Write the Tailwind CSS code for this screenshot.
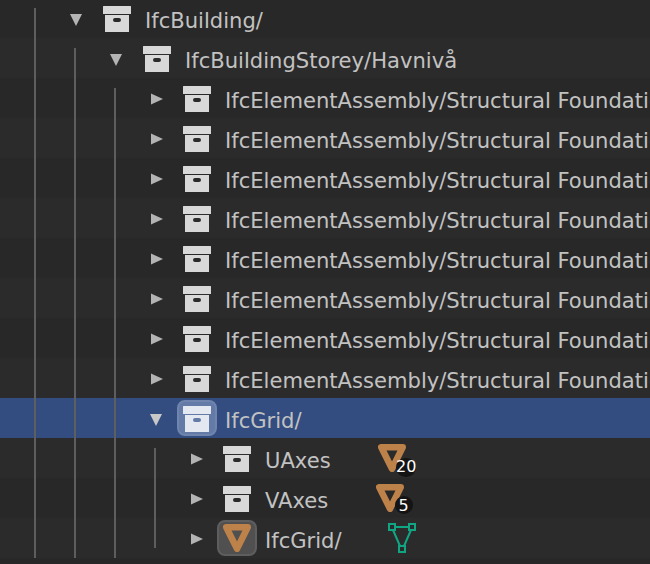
<!DOCTYPE html>
<html lang="en">
<head>
  <meta charset="UTF-8" />
  <title>Outliner</title>
  <script src="https://cdn.jsdelivr.net/npm/@tailwindcss/browser@4"></script>
</head>
<body class="w-[650px] h-[564px] overflow-hidden bg-[#282828] font-['DejaVu_Sans',sans-serif] text-[21.1px] text-[#c2c2c2]">

<!-- small svg defs used by every row -->
<svg class="hidden">
  <symbol id="box" viewBox="0 0 28 26">
    <path fill-rule="evenodd" d="M0 0.500a.5.5 0 0 1 .5-.5h27a.5.5 0 0 1 .5.5v7a.5.5 0 0 1-.5.5H.5a.5.5 0 0 1-.5-.5zM2 9h24v16.500a.5.5 0 0 1-.5.5h-23a.5.5 0 0 1-.5-.5zM12 12a2 2 0 0 0 0 4h4a2 2 0 0 0 0-4z"/>
  </symbol>
  <symbol id="tri" viewBox="0 0 28 28">
    <path fill="none" stroke="currentColor" stroke-width="6.500" stroke-linejoin="round" d="M3.250 3.250h21.500L14 24.750z"/>
  </symbol>
  <symbol id="right" viewBox="0 0 12 12"><path d="M0 0.500l12 5.500-12 5.500z"/></symbol>
  <symbol id="down" viewBox="0 0 12 12"><path d="M0 0h12L6 12z"/></symbol>
</svg>

<div class="relative -mt-[2px]">
  <div class="absolute z-10 left-[34px] top-[10px] bottom-0 w-[2px] bg-[#5e5e5e]"></div>
  <div class="h-10 flex items-center pl-[70px]">
    <svg class="w-3 h-3 mt-1 shrink-0 fill-[#b4b4b4]"><use href="#down"/></svg>
    <svg class="w-7 h-[26px] ml-[21px] mt-[2px] shrink-0 fill-[#d8d8d8]"><use href="#box"/></svg>
    <span class="ml-[14px] pt-[6px] whitespace-nowrap">IfcBuilding/</span>
  </div>

  <div class="relative">
    <div class="absolute z-10 left-[74px] top-[10px] bottom-0 w-[2px] bg-[#5e5e5e]"></div>
    <div class="h-10 flex items-center pl-[110px] bg-[#2b2b2b]">
      <svg class="w-3 h-3 mt-1 shrink-0 fill-[#b4b4b4]"><use href="#down"/></svg>
      <svg class="w-7 h-[26px] ml-[21px] mt-[2px] shrink-0 fill-[#d8d8d8]"><use href="#box"/></svg>
      <span class="ml-[14px] pt-[6px] whitespace-nowrap">IfcBuildingStorey/Havnivå</span>
    </div>

    <div class="relative">
      <div class="absolute z-10 left-[114px] top-[10px] bottom-0 w-[2px] bg-[#5e5e5e]"></div>

      <div class="h-10 flex items-center pl-[151px]">
        <svg class="w-3 h-3 mt-[2px] shrink-0 fill-[#b4b4b4]"><use href="#right"/></svg>
        <svg class="w-7 h-[26px] ml-[20px] mt-[2px] shrink-0 fill-[#d8d8d8]"><use href="#box"/></svg>
        <span class="ml-[14px] pt-[6px] whitespace-nowrap">IfcElementAssembly/Structural Foundation</span>
      </div>
      <div class="h-10 flex items-center pl-[151px] bg-[#2b2b2b]">
        <svg class="w-3 h-3 mt-[2px] shrink-0 fill-[#b4b4b4]"><use href="#right"/></svg>
        <svg class="w-7 h-[26px] ml-[20px] mt-[2px] shrink-0 fill-[#d8d8d8]"><use href="#box"/></svg>
        <span class="ml-[14px] pt-[6px] whitespace-nowrap">IfcElementAssembly/Structural Foundation</span>
      </div>
      <div class="h-10 flex items-center pl-[151px]">
        <svg class="w-3 h-3 mt-[2px] shrink-0 fill-[#b4b4b4]"><use href="#right"/></svg>
        <svg class="w-7 h-[26px] ml-[20px] mt-[2px] shrink-0 fill-[#d8d8d8]"><use href="#box"/></svg>
        <span class="ml-[14px] pt-[6px] whitespace-nowrap">IfcElementAssembly/Structural Foundation</span>
      </div>
      <div class="h-10 flex items-center pl-[151px] bg-[#2b2b2b]">
        <svg class="w-3 h-3 mt-[2px] shrink-0 fill-[#b4b4b4]"><use href="#right"/></svg>
        <svg class="w-7 h-[26px] ml-[20px] mt-[2px] shrink-0 fill-[#d8d8d8]"><use href="#box"/></svg>
        <span class="ml-[14px] pt-[6px] whitespace-nowrap">IfcElementAssembly/Structural Foundation</span>
      </div>
      <div class="h-10 flex items-center pl-[151px]">
        <svg class="w-3 h-3 mt-[2px] shrink-0 fill-[#b4b4b4]"><use href="#right"/></svg>
        <svg class="w-7 h-[26px] ml-[20px] mt-[2px] shrink-0 fill-[#d8d8d8]"><use href="#box"/></svg>
        <span class="ml-[14px] pt-[6px] whitespace-nowrap">IfcElementAssembly/Structural Foundation</span>
      </div>
      <div class="h-10 flex items-center pl-[151px] bg-[#2b2b2b]">
        <svg class="w-3 h-3 mt-[2px] shrink-0 fill-[#b4b4b4]"><use href="#right"/></svg>
        <svg class="w-7 h-[26px] ml-[20px] mt-[2px] shrink-0 fill-[#d8d8d8]"><use href="#box"/></svg>
        <span class="ml-[14px] pt-[6px] whitespace-nowrap">IfcElementAssembly/Structural Foundation</span>
      </div>
      <div class="h-10 flex items-center pl-[151px]">
        <svg class="w-3 h-3 mt-[2px] shrink-0 fill-[#b4b4b4]"><use href="#right"/></svg>
        <svg class="w-7 h-[26px] ml-[20px] mt-[2px] shrink-0 fill-[#d8d8d8]"><use href="#box"/></svg>
        <span class="ml-[14px] pt-[6px] whitespace-nowrap">IfcElementAssembly/Structural Foundation</span>
      </div>
      <div class="h-10 flex items-center pl-[151px] bg-[#2b2b2b]">
        <svg class="w-3 h-3 mt-[2px] shrink-0 fill-[#b4b4b4]"><use href="#right"/></svg>
        <svg class="w-7 h-[26px] ml-[20px] mt-[2px] shrink-0 fill-[#d8d8d8]"><use href="#box"/></svg>
        <span class="ml-[14px] pt-[6px] whitespace-nowrap">IfcElementAssembly/Structural Foundation</span>
      </div>

      <!-- selected row -->
      <div class="h-10 flex items-center pl-[150px] bg-[#334d80]">
        <svg class="w-3 h-3 mt-1 shrink-0 fill-[#c8c8c8]"><use href="#down"/></svg>
        <div class="ml-[15px] w-10 h-9 shrink-0 rounded-[8px] bg-[#647aa7] border-2 border-[#6f85ae] flex items-center justify-center">
          <svg class="w-7 h-[26px] mt-[2px] fill-[#e4e8f0]"><use href="#box"/></svg>
        </div>
        <span class="ml-[8px] pt-[6px] whitespace-nowrap">IfcGrid/</span>
      </div>

      <div class="relative">
        <div class="absolute z-10 left-[154px] top-[10px] h-[100px] w-[2px] bg-[#5e5e5e]"></div>

        <div class="h-10 flex items-center pl-[191px] bg-[#2b2b2b]">
          <svg class="w-3 h-3 mt-[2px] shrink-0 fill-[#b4b4b4]"><use href="#right"/></svg>
          <svg class="w-7 h-[26px] ml-[20px] mt-[2px] shrink-0 fill-[#d8d8d8]"><use href="#box"/></svg>
          <span class="ml-[14px] pt-[6px] w-[113px] whitespace-nowrap">UAxes</span>
          <div class="relative w-7 h-7 text-[#bd814a]">
            <svg class="w-7 h-7"><use href="#tri"/></svg>
            <span class="absolute left-[18px] top-[14px] w-5 h-[19px] rounded-full bg-[#141414] text-[16px] leading-[18px] text-white text-center whitespace-nowrap">20</span>
          </div>
        </div>
        <div class="h-10 flex items-center pl-[191px]">
          <svg class="w-3 h-3 mt-[2px] shrink-0 fill-[#b4b4b4]"><use href="#right"/></svg>
          <svg class="w-7 h-[26px] ml-[20px] mt-[2px] shrink-0 fill-[#d8d8d8]"><use href="#box"/></svg>
          <span class="ml-[14px] pt-[6px] w-[111px] whitespace-nowrap">VAxes</span>
          <div class="relative w-7 h-7 text-[#bd814a]">
            <svg class="w-7 h-7"><use href="#tri"/></svg>
            <span class="absolute left-[19px] top-[12px] w-[18px] h-[18px] pr-px rounded-full bg-[#141414] text-[16px] leading-[20px] text-white text-center">5</span>
          </div>
        </div>
        <div class="h-10 flex items-center pl-[191px] bg-[#2b2b2b]">
          <svg class="w-3 h-3 mt-[2px] shrink-0 fill-[#b4b4b4]"><use href="#right"/></svg>
          <div class="ml-[14px] w-10 h-9 shrink-0 rounded-[8px] bg-[#505050] border-2 border-[#5e5e5e] flex items-center justify-center text-[#bd814a]">
            <svg class="w-7 h-7"><use href="#tri"/></svg>
          </div>
          <span class="ml-[8px] pt-[6px] w-[123px] whitespace-nowrap">IfcGrid/</span>
          <svg viewBox="0 0 28 30" class="w-7 h-[30px] fill-none stroke-[#10a583] stroke-2">
            <path d="M7 4H21M5 7L12 23M23 7L16 23"/>
            <rect x="1" y="1" width="6" height="6"/><rect x="21" y="1" width="6" height="6"/><rect x="11" y="23" width="6" height="6"/>
          </svg>
        </div>
      </div>
    </div>
  </div>
</div>
</body>
</html>
